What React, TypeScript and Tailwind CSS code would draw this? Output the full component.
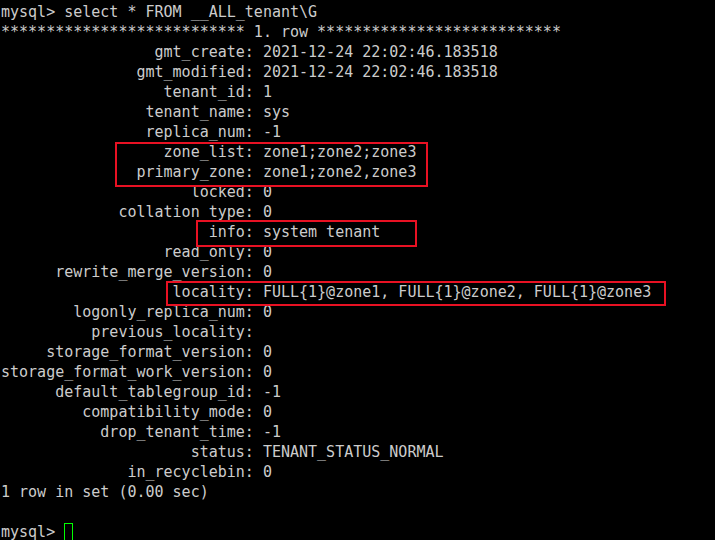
const rows: [string, string][] = [
  ["gmt_create", "2021-12-24 22:02:46.183518"],
  ["gmt_modified", "2021-12-24 22:02:46.183518"],
  ["tenant_id", "1"],
  ["tenant_name", "sys"],
  ["replica_num", "-1"],
  ["zone_list", "zone1;zone2;zone3"],
  ["primary_zone", "zone1;zone2,zone3"],
  ["locked", "0"],
  ["collation_type", "0"],
  ["info", "system tenant"],
  ["read_only", "0"],
  ["rewrite_merge_version", "0"],
  ["locality", "FULL{1}@zone1, FULL{1}@zone2, FULL{1}@zone3"],
  ["logonly_replica_num", "0"],
  ["previous_locality", ""],
  ["storage_format_version", "0"],
  ["storage_format_work_version", "0"],
  ["default_tablegroup_id", "-1"],
  ["compatibility_mode", "0"],
  ["drop_tenant_time", "-1"],
  ["status", "TENANT_STATUS_NORMAL"],
  ["in_recyclebin", "0"],
];

const stars = "*".repeat(27);

export default function App() {
  return (
    <div className="relative w-[715px] h-[540px] overflow-hidden bg-black text-[#cccccc] font-['DejaVu_Sans_Mono',monospace] text-[15px] leading-[20px] pt-[2px] pl-[1px] whitespace-pre">
      <div>mysql&gt; select * FROM __ALL_tenant\G</div>
      <div>{`${stars} 1. row ${stars}`}</div>
      {rows.map(([k, v]) => (
        <div key={k}>
          {`${k.padStart(27, " ")}: ${v}`}
        </div>
      ))}
      <div>1 row in set (0.00 sec)</div>
      <div>&nbsp;</div>
      <div className="flex">
        <span>mysql&gt; </span>
        <span className="w-[9px] h-[19px] mt-[1px] border border-[#00ff00]" />
      </div>

      {/* highlight boxes */}
      <div className="absolute left-[115px] top-[142px] w-[313px] h-[45px] border-2 border-[#e81123]" />
      <div className="absolute left-[196px] top-[220px] w-[221px] h-[27px] border-2 border-[#e81123]" />
      <div className="absolute left-[166px] top-[281px] w-[500px] h-[25px] border-2 border-[#e81123]" />
    </div>
  );
}
